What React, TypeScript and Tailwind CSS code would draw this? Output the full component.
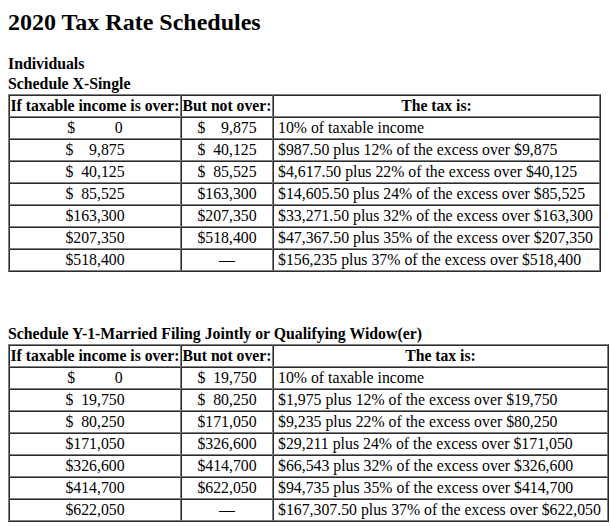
import React from "react";

const NB = "\u00a0";

function money(v: string): string {
  if (v === "—") return v;
  let pad = 0;
  if (v.length === 1) pad = 10;
  else if (v.length === 5) pad = 4;
  else if (v.length === 6) pad = 2;
  else pad = 0;
  return "$" + NB.repeat(pad) + v;
}

const single: [string, string, string][] = [
  ["0", "9,875", "10% of taxable income"],
  ["9,875", "40,125", "$987.50 plus 12% of the excess over $9,875"],
  ["40,125", "85,525", "$4,617.50 plus 22% of the excess over $40,125"],
  ["85,525", "163,300", "$14,605.50 plus 24% of the excess over $85,525"],
  ["163,300", "207,350", "$33,271.50 plus 32% of the excess over $163,300"],
  ["207,350", "518,400", "$47,367.50 plus 35% of the excess over $207,350"],
  ["518,400", "—", "$156,235 plus 37% of the excess over $518,400"],
];

const married: [string, string, string][] = [
  ["0", "19,750", "10% of taxable income"],
  ["19,750", "80,250", "$1,975 plus 12% of the excess over $19,750"],
  ["80,250", "171,050", "$9,235 plus 22% of the excess over $80,250"],
  ["171,050", "326,600", "$29,211 plus 24% of the excess over $171,050"],
  ["326,600", "414,700", "$66,543 plus 32% of the excess over $326,600"],
  ["414,700", "622,050", "$94,735 plus 35% of the excess over $414,700"],
  ["622,050", "—", "$167,307.50 plus 37% of the excess over $622,050"],
];

function TaxTable({ rows, wide }: { rows: [string, string, string][]; wide: boolean }) {
  const cell =
    "border border-[gray] [border-style:inset] py-[1px] leading-[18px] whitespace-nowrap overflow-visible";
  const head = "text-[15.7px] font-bold text-center";
  return (
    <table
      className={`table-fixed border-separate border-spacing-0 border border-[gray] [border-style:outset] text-[15.8px] ${
        wide ? "w-[601px]" : "w-[593px]"
      }`}
    >
      <thead>
        <tr>
          <th className={`${cell} ${head} w-[172px] px-0`}>If taxable income is over:</th>
          <th className={`${cell} ${head} w-[92px] px-0`}>But not over:</th>
          <th className={`${cell} ${head} px-[4px]`}>The tax is:</th>
        </tr>
      </thead>
      <tbody>
        {rows.map((r, i) => (
          <tr key={i}>
            <td className={`${cell} px-[1px] text-center`}>{money(r[0])}</td>
            <td className={`${cell} px-[1px] text-center`}>{money(r[1])}</td>
            <td className={`${cell} pl-[4px] pr-[2px] text-left`}>{r[2]}</td>
          </tr>
        ))}
      </tbody>
    </table>
  );
}

export default function App() {
  return (
    <div className="min-h-[527px] bg-white text-black font-['Liberation_Serif',serif] p-[8px]">
      <h2 className="text-[24px] font-bold leading-[28px]">2020 Tax Rate Schedules</h2>
      <div className="mt-[18px] text-[15.8px] font-bold leading-[20px]">Individuals</div>
      <div className="text-[15.8px] font-bold leading-[20px]">Schedule X-Single</div>
      <TaxTable rows={single} wide={false} />
      <div className="mt-[52px] text-[15.8px] font-bold leading-[20px]">
        Schedule Y-1-Married Filing Jointly or Qualifying Widow(er)
      </div>
      <TaxTable rows={married} wide={true} />
    </div>
  );
}
